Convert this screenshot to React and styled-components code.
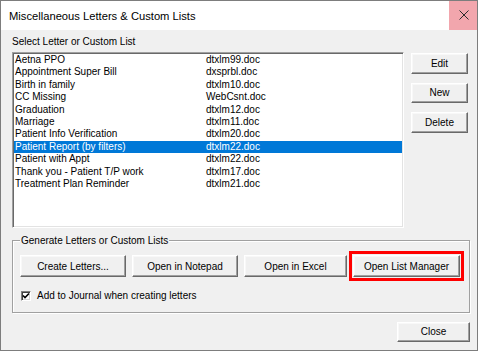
import React from 'react';
import styled, { createGlobalStyle } from 'styled-components';

const Global = createGlobalStyle`
  html, body { margin: 0; padding: 0; background: #ffffff; }
  body { font-family: "Liberation Sans", Arial, sans-serif; }
  * { box-sizing: border-box; }
`;

const Window = styled.div`
  width: 478px;
  height: 351px;
  border: 1px solid #7d7d7d;
  background: #f0f0f0;
  display: flex;
  flex-direction: column;
`;

const TitleBar = styled.div`
  height: 29px;
  flex: none;
  background: #ffffff;
  display: flex;
  align-items: center;
  justify-content: space-between;
  padding-left: 8px;
`;

const Title = styled.span`
  font-size: 11.2px;
  color: #000;
  line-height: 14px;
`;

const CloseX = styled.div`
  width: 28px;
  height: 29px;
  margin-top: -1px;
  background: #f2a6ad;
  display: flex;
  align-items: center;
  justify-content: center;
  padding-left: 2px;
`;

const Client = styled.div`
  flex: 1;
  padding: 6px 7px 0 11px;
  display: flex;
  flex-direction: column;
`;

const Label = styled.div`
  font-size: 10px;
  line-height: 12px;
  color: #000;
`;

const MainRow = styled.div`
  display: flex;
  gap: 7px;
  margin-top: 4px;
`;

const ListBox = styled.div`
  width: 392px;
  height: 176px;
  background: #fff;
  border: 1px solid;
  border-color: #a0a0a0 #ffffff #ffffff #a0a0a0;
  box-shadow: inset 1px 1px #696969, inset -1px -1px #e3e3e3;
  padding: 1px;
`;

const Row = styled.div`
  display: grid;
  grid-template-columns: 191px 1fr;
  height: 12.4px;
  line-height: 12.4px;
  padding-left: 1px;
  font-size: 10px;
  white-space: nowrap;
  color: ${p => (p.$selected ? '#ffffff' : '#000000')};
  background: ${p => (p.$selected ? '#0078d7' : 'transparent')};
`;

const SideColumn = styled.div`
  display: flex;
  flex-direction: column;
  gap: 9px;
  padding-top: 1px;
`;

const Button = styled.button`
  width: ${p => p.$w}px;
  height: ${p => p.$h}px;
  flex: none;
  padding: 0;
  margin: 0;
  font-family: "Liberation Sans", Arial, sans-serif;
  font-size: 10px;
  color: #000;
  background: #f0f0f0;
  border: 1px solid;
  border-color: #ffffff #696969 #696969 #ffffff;
  box-shadow: inset -1px -1px #a0a0a0, inset 1px 1px #f8f8f8;
  outline: ${p => (p.$highlighted ? '3px solid #ff0000' : 'none')};
  outline-offset: 1px;
`;

const Group = styled.fieldset`
  width: 458px;
  margin: 6.5px 0 0 0;
  padding: 8.5px 7px 11px 7px;
  min-width: 0;
  border: 1px solid #a0a0a0;
  box-shadow: inset 1px 1px #ffffff, 1px 1px #ffffff;
`;

const Legend = styled.legend`
  font-size: 10px;
  line-height: 12px;
  padding: 0 1px;
  color: #000;
  background: #f0f0f0;
`;

const ButtonRow = styled.div`
  display: flex;
  gap: 6px;
`;

const CheckRow = styled.label`
  display: flex;
  align-items: center;
  gap: 6px;
  margin: 14px 0 0 1px;
  height: 10px;
  font-size: 10px;
  line-height: 12px;
  color: #000;
`;

const CheckBox = styled.span`
  width: 10px;
  height: 10px;
  flex: none;
  background: #fff;
  border: 1px solid;
  border-color: #808080 #ffffff #ffffff #808080;
  box-shadow: inset 1px 1px #404040, inset -1px -1px #d4d4d4;
  display: flex;
  align-items: center;
  justify-content: center;
`;

const CloseRow = styled.div`
  display: flex;
  justify-content: flex-end;
  margin-top: 8.5px;
`;

const items = [
  ['Aetna PPO', 'dtxlm99.doc'],
  ['Appointment Super Bill', 'dxsprbl.doc'],
  ['Birth in family', 'dtxlm10.doc'],
  ['CC Missing', 'WebCsnt.doc'],
  ['Graduation', 'dtxlm12.doc'],
  ['Marriage', 'dtxlm11.doc'],
  ['Patient Info Verification', 'dtxlm20.doc'],
  ['Patient Report (by filters)', 'dtxlm22.doc'],
  ['Patient with Appt', 'dtxlm22.doc'],
  ['Thank you - Patient T/P work', 'dtxlm17.doc'],
  ['Treatment Plan Reminder', 'dtxlm21.doc'],
];

export default function App() {
  return (
    <>
      <Global />
      <Window>
        <TitleBar>
          <Title>Miscellaneous Letters &amp; Custom Lists</Title>
          <CloseX>
            <svg width="10" height="10" viewBox="0 0 10 10">
              <path d="M0.5 0.5 L9.5 9.5 M9.5 0.5 L0.5 9.5" stroke="#2b2b2b" strokeWidth="1" fill="none" />
            </svg>
          </CloseX>
        </TitleBar>
        <Client>
          <Label>Select Letter or Custom List</Label>
          <MainRow>
            <ListBox>
              {items.map(([name, file], i) => (
                <Row key={i} $selected={i === 7}>
                  <span>{name}</span>
                  <span>{file}</span>
                </Row>
              ))}
            </ListBox>
            <SideColumn>
              <Button $w={57} $h={20.5}>Edit</Button>
              <Button $w={57} $h={20.5}>New</Button>
              <Button $w={57} $h={20.5}>Delete</Button>
            </SideColumn>
          </MainRow>
          <Group>
            <Legend>Generate Letters or Custom Lists</Legend>
            <ButtonRow>
              <Button $w={106} $h={22}>Create Letters...</Button>
              <Button $w={106} $h={22}>Open in Notepad</Button>
              <Button $w={103} $h={22}>Open in Excel</Button>
              <Button $w={107} $h={22} $highlighted>Open List Manager</Button>
            </ButtonRow>
            <CheckRow>
              <CheckBox>
                <svg width="8" height="8" viewBox="0 0 8 8">
                  <path d="M1 3.5 L3 5.5 L7 1.5" stroke="#000" strokeWidth="1.6" fill="none" />
                </svg>
              </CheckBox>
              Add to Journal when creating letters
            </CheckRow>
          </Group>
          <CloseRow>
            <Button $w={73} $h={20}>Close</Button>
          </CloseRow>
        </Client>
      </Window>
    </>
  );
}
